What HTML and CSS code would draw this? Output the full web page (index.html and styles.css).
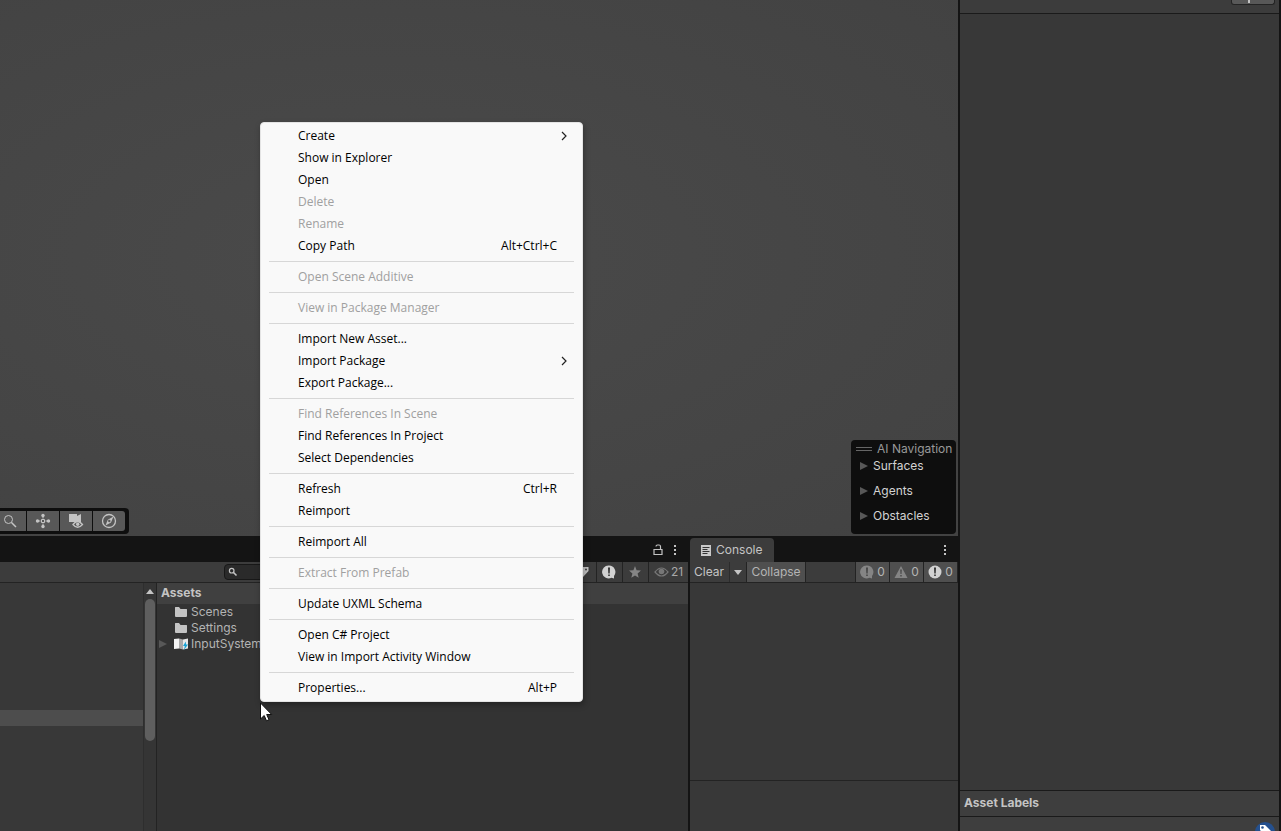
FILE: index.html
```
<!DOCTYPE html>
<html lang="en">
<head>
    <meta charset="UTF-8">
    <meta name="viewport" content="width=device-width, initial-scale=1.0">
    <title>Editor</title>
    <link rel="stylesheet" href="styles.css">
</head>
<body>
    <div class="editor">
        <div class="workspace">
            <main class="scene">
                <div class="scene-tools">
                    <button class="scene-tool first" aria-label="Zoom">
                        <svg width="16" height="16" viewBox="0 0 16 16" fill="none" stroke="#c4c4c4"><circle cx="6.5" cy="6.5" r="4"/><path d="M9.5 9.5l4.5 4.5" stroke-width="1.5"/></svg>
                    </button>
                    <button class="scene-tool" aria-label="Move">
                        <svg width="16" height="16" viewBox="0 0 16 16" fill="#c4c4c4"><circle cx="8" cy="2.500" r="1.700"/><circle cx="8" cy="13.500" r="1.700"/><circle cx="2.500" cy="8" r="1.700"/><circle cx="13.500" cy="8" r="1.700"/><path d="M7.500 3h1v2.500h-1zM7.500 10.500h1V13h-1zM3 7.500h2.500v1H3zM10.500 7.500H13v1h-2.500z"/><path d="M6.500 6.500h3v3h-3z" fill="none" stroke="#c4c4c4"/></svg>
                    </button>
                    <button class="scene-tool" aria-label="Camera view">
                        <svg width="16" height="16" viewBox="0 0 16 16"><path d="M1 1h8v2l4-2v8H6.500L5 9H1z" fill="#c4c4c4"/><path d="M5 11.500Q9.500 5.500 14.500 11.500Q9.500 17 5 11.500z" fill="#585858" stroke="#c4c4c4" stroke-width="1.300"/><circle cx="9.700" cy="11.300" r="1.700" fill="#c4c4c4"/></svg>
                    </button>
                    <button class="scene-tool last" aria-label="Navigation">
                        <svg width="16" height="16" viewBox="0 0 16 16" fill="none" stroke="#c4c4c4" stroke-width="1.300"><circle cx="8" cy="8" r="6.500"/><path d="M12.500 3.500l-2.500 6-5.500 3 2.300-5.700z" fill="#c4c4c4" stroke="none"/><circle cx="8.300" cy="8" r="1.200" fill="#585858" stroke="none"/></svg>
                    </button>
                </div>
                <section class="nav-overlay">
                    <h2 class="nav-title"><span class="grip"></span>AI Navigation</h2>
                    <button class="foldout"><span class="arrow-right"></span>Surfaces</button>
                    <button class="foldout"><span class="arrow-right"></span>Agents</button>
                    <button class="foldout"><span class="arrow-right"></span>Obstacles</button>
                </section>
            </main>

            <div class="docks">
                <section class="project">
                    <div class="tab-strip">
                        <button class="icon-button" aria-label="Lock">
                            <svg width="10" height="12" viewBox="0 0 10 12" fill="none" stroke="#c4c4c4" stroke-width="1.200"><path d="M1 5.500h8v5H1zM7.500 5.500V2.500Q7.500 1 6 1H4.500Q3 1 3 2.500"/></svg>
                        </button>
                        <button class="icon-button" aria-label="Project options">
                            <svg width="4" height="12" viewBox="0 0 4 12" fill="#c4c4c4"><path d="M1 1h2v2H1zM1 5h2v2H1zM1 9h2v2H1z"/></svg>
                        </button>
                    </div>
                    <div class="toolbar">
                        <label class="search">
                            <svg width="10" height="10" viewBox="0 0 10 10" fill="none" stroke="#c4c4c4" stroke-width="1.200"><circle cx="3.700" cy="3.700" r="2.300"/><path d="M5.500 5.500l3 3" stroke-width="1.600"/></svg>
                            <input type="text" aria-label="Search assets">
                        </label>
                        <button class="tool-button" aria-label="Search by label">
                            <svg width="12" height="12" viewBox="0 0 12 12" fill="#c4c4c4"><path d="M1 1h10.500v4L6 11 1 7z"/><circle cx="9" cy="3.500" r="1" fill="#3c3c3c"/></svg>
                        </button>
                        <button class="tool-button" aria-label="Search by log type">
                            <svg width="14" height="14" viewBox="0 0 14 14"><path d="M7 .500a6.500 6.500 0 0 1 5 10.500v2.500l-2.500-.700A6.500 6.500 0 1 1 7 .500z" fill="#d2d2d2"/><path d="M6 2.500h2l-.300 6H6.300zM6.200 9.500h1.600V11H6.200z" fill="#333"/></svg>
                        </button>
                        <button class="tool-button" aria-label="Favorites">
                            <svg width="14" height="14" viewBox="0 0 14 14" fill="#858585"><path d="M7 1l1.600 4.200 4.400.300-3.400 2.900 1.100 4.400L7 10.400l-3.700 2.400 1.100-4.400L1 5.500l4.400-.300z"/></svg>
                        </button>
                        <button class="tool-button hidden-count">
                            <svg width="15" height="12" viewBox="0 0 15 12" fill="none" stroke="#777"><path d="M1 6Q7.500-2 14 6Q7.500 14 1 6z" stroke-width="1.200"/><circle cx="7.500" cy="5.500" r="2.800" fill="#777" stroke="none"/></svg>21
                        </button>
                    </div>
                    <div class="project-body">
                        <div class="folder-tree">
                            <div class="tree-selection"></div>
                        </div>
                        <div class="scrollbar">
                            <span class="arrow-up"></span>
                            <div class="thumb"></div>
                        </div>
                        <div class="assets">
                            <h2 class="assets-title">Assets</h2>
                            <ul class="asset-list">
                                <li class="asset">
                                    <svg width="14" height="12" viewBox="0 0 14 12" fill="#c4c4c4"><path d="M1 1.500Q1 1 1.500 1H5l1.500 2H12.500q.500 0 .500.500V10q0 1-1 1H2q-1 0-1-1z"/></svg>
                                    Scenes
                                </li>
                                <li class="asset">
                                    <svg width="14" height="12" viewBox="0 0 14 12" fill="#c4c4c4"><path d="M1 1.500Q1 1 1.500 1H5l1.500 2H12.500q.500 0 .500.500V10q0 1-1 1H2q-1 0-1-1z"/></svg>
                                    Settings
                                </li>
                                <li class="asset">
                                    <span class="arrow-right"></span>
                                    <svg width="14" height="12" viewBox="0 0 14 12"><path d="M0 1l5-.500v10L0 11z" fill="#f4f4f4"/><path d="M5 .500L9 1.500v10L5 10.500z" fill="#aaa"/><path d="M9 1.500l5-1v10l-5 1z" fill="#e8e8e8"/><path d="M11.800 3.500L9 8h1.800L10 12l4-5.500h-2z" fill="#19a3d4"/></svg>
                                    InputSystem
                                </li>
                            </ul>
                        </div>
                    </div>
                </section>

                <section class="console">
                    <div class="tab-strip">
                        <button class="tab">
                            <svg width="10" height="11" viewBox="0 0 10 11"><path d="M0 0h10v11H0z" fill="#c9c9c9"/><path d="M1.500 2.500h7M1.500 4.500h5M1.500 6.500h7M1.500 8.500h5" stroke="#333"/></svg>
                            Console
                        </button>
                        <button class="icon-button" aria-label="Console options">
                            <svg width="4" height="12" viewBox="0 0 4 12" fill="#c4c4c4"><path d="M1 1h2v2H1zM1 5h2v2H1zM1 9h2v2H1z"/></svg>
                        </button>
                    </div>
                    <div class="toolbar">
                        <button class="clear">Clear</button>
                        <button class="clear-menu" aria-label="Clear options"><span class="arrow-down"></span></button>
                        <button class="collapse">Collapse</button>
                        <div class="counters">
                            <button class="counter">
                                <svg width="14" height="14" viewBox="0 0 14 14"><path d="M7 .500a6.500 6.500 0 0 1 5 10.500v2.500l-2.500-.700A6.500 6.500 0 1 1 7 .500z" fill="#858585"/><path d="M6 2.500h2l-.300 6H6.300zM6.200 9.500h1.600V11H6.200z" fill="#484848"/></svg>0
                            </button>
                            <button class="counter">
                                <svg width="14" height="14" viewBox="0 0 14 14"><path d="M7 1l6.500 12H.500z" fill="#858585"/><path d="M6.200 4.500h1.600L7.500 9h-1zM6.300 10h1.400v1.500H6.300z" fill="#484848"/></svg>0
                            </button>
                            <button class="counter">
                                <svg width="14" height="14" viewBox="0 0 14 14"><circle cx="7" cy="7" r="6.500" fill="#d2d2d2"/><path d="M6 2.500h2l-.300 6H6.300zM6.200 9.500h1.600V11H6.200z" fill="#333"/></svg>0
                            </button>
                        </div>
                    </div>
                    <div class="console-log"></div>
                    <div class="console-detail"></div>
                </section>
            </div>
        </div>

        <aside class="inspector">
            <div class="inspector-header">
                <button class="open-button" aria-label="Open"><span class="letter-stem"></span></button>
            </div>
            <div class="inspector-body"></div>
            <h2 class="labels-title">Asset Labels</h2>
            <div class="labels-body">
                <button class="label-button" aria-label="Edit labels">
                    <svg width="20" height="20" viewBox="0 0 20 20"><circle cx="10" cy="10" r="10" fill="#25508e"/><path d="M5 3h5l7 7-5 6-7-8z" fill="#fff"/><circle cx="7.500" cy="5.500" r="1.300" fill="#25508e"/></svg>
                </button>
            </div>
        </aside>
    </div>

    <div class="context-menu" role="menu">
        <button class="menu-item" role="menuitem">Create <svg class="chevron" width="6" height="10" viewBox="0 0 6 10"><path d="M1 1l4 4-4 4"/></svg></button>
        <button class="menu-item" role="menuitem">Show in Explorer</button>
        <button class="menu-item" role="menuitem">Open</button>
        <button class="menu-item" role="menuitem" disabled>Delete</button>
        <button class="menu-item" role="menuitem" disabled>Rename</button>
        <button class="menu-item" role="menuitem">Copy Path <span class="shortcut">Alt+Ctrl+C</span></button>
        <hr>
        <button class="menu-item" role="menuitem" disabled>Open Scene Additive</button>
        <hr>
        <button class="menu-item" role="menuitem" disabled>View in Package Manager</button>
        <hr>
        <button class="menu-item" role="menuitem">Import New Asset...</button>
        <button class="menu-item" role="menuitem">Import Package <svg class="chevron" width="6" height="10" viewBox="0 0 6 10"><path d="M1 1l4 4-4 4"/></svg></button>
        <button class="menu-item" role="menuitem">Export Package...</button>
        <hr>
        <button class="menu-item" role="menuitem" disabled>Find References In Scene</button>
        <button class="menu-item" role="menuitem">Find References In Project</button>
        <button class="menu-item" role="menuitem">Select Dependencies</button>
        <hr>
        <button class="menu-item" role="menuitem">Refresh <span class="shortcut">Ctrl+R</span></button>
        <button class="menu-item" role="menuitem">Reimport</button>
        <hr>
        <button class="menu-item" role="menuitem">Reimport All</button>
        <hr>
        <button class="menu-item" role="menuitem" disabled>Extract From Prefab</button>
        <hr>
        <button class="menu-item" role="menuitem">Update UXML Schema</button>
        <hr>
        <button class="menu-item" role="menuitem">Open C# Project</button>
        <button class="menu-item" role="menuitem">View in Import Activity Window</button>
        <hr>
        <button class="menu-item" role="menuitem">Properties... <span class="shortcut">Alt+P</span></button>
    </div>

    <svg class="cursor" width="13" height="20" viewBox="0 0 13 20"><path d="M.500 1v16l3.700-3.500 2.300 5.300 2.500-1.100-2.300-5.200h5z" fill="#fff" stroke="#111"/></svg>
</body>
</html>
```
FILE: styles.css
```
* {
    box-sizing: border-box;
}

body {
    margin: 0;
    background: #383838;
    color: #c4c4c4;
    font-family: Inter, sans-serif;
    font-size: 12px;
    line-height: 16px;
    overflow: hidden;
}

button {
    margin: 0;
    padding: 0;
    border: none;
    background: none;
    color: inherit;
    font: inherit;
}

h2 {
    margin: 0;
    font-size: 12px;
}

svg {
    flex: none;
    display: block;
}

.editor {
    display: flex;
    height: 100vh;
}

.workspace {
    flex: 1;
    min-width: 0;
    display: flex;
    flex-direction: column;
}

/* scene view */
.scene {
    flex: 1;
    display: flex;
    justify-content: space-between;
    align-items: flex-end;
    padding: 0 2px 2px 0;
    background: radial-gradient(ellipse at 40% 48%, #4a4a4a, #424242);
}

.scene-tools {
    display: flex;
    gap: 1px;
    padding: 3px 4px 3px 0;
    background: #0e0e0e;
    border-radius: 0 4px 4px 0;
}

.scene-tool {
    display: flex;
    align-items: center;
    justify-content: center;
    width: 32px;
    height: 20px;
    background: #585858;
}

.scene-tool.first {
    width: 26px;
    padding-right: 6px;
}

.scene-tool.last {
    border-radius: 0 3px 3px 0;
}

.nav-overlay {
    display: flex;
    flex-direction: column;
    width: 105px;
    height: 94px;
    background: #0e0e0e;
    border-radius: 4px;
}

.nav-title {
    display: flex;
    align-items: center;
    gap: 5px;
    height: 17px;
    padding-left: 5px;
    color: #999;
    font-weight: normal;
    white-space: nowrap;
}

.grip {
    width: 16px;
    height: 4px;
    border: solid #666;
    border-width: 1px 0;
}

.foldout {
    display: flex;
    align-items: center;
    gap: 5px;
    height: 17px;
    margin-bottom: 8px;
    padding-left: 9px;
    color: #d2d2d2;
}

.arrow-right {
    border: solid transparent;
    border-width: 4px 0 4px 8px;
    border-left-color: #585858;
}

/* bottom docks */
.docks {
    display: flex;
    height: 295px;
}

.project {
    flex: 1;
    min-width: 0;
    display: flex;
    flex-direction: column;
    background: #333;
}

.tab-strip {
    display: flex;
    align-items: center;
    justify-content: flex-end;
    gap: 10px;
    height: 26px;
    padding: 2px 11px 0 0;
    background: #141414;
}

.toolbar {
    display: flex;
    height: 21px;
    background: #3c3c3c;
    border-bottom: 1px solid #232323;
}

.project .toolbar {
    justify-content: flex-end;
}

.search {
    display: flex;
    align-items: center;
    width: 340px;
    height: 16px;
    margin: 2px 6px 0 0;
    padding-left: 3px;
    background: #2a2a2a;
    border: 1px solid #181818;
    border-radius: 4px;
}

.search input {
    flex: 1;
    min-width: 0;
    height: 14px;
    padding: 0 4px;
    border: none;
    background: none;
    color: inherit;
    font: inherit;
}

.tool-button {
    display: flex;
    align-items: center;
    justify-content: center;
    width: 26px;
    padding-right: 2px;
    border-left: 1px solid #232323;
}

.hidden-count {
    width: 40px;
    gap: 2px;
    padding: 0;
    color: #a8a8a8;
}

.project-body {
    flex: 1;
    display: flex;
}

.folder-tree {
    width: 143px;
    padding-top: 127px;
    background: #383838;
}

.tree-selection {
    height: 16px;
    background: #4d4d4d;
}

.scrollbar {
    display: flex;
    flex-direction: column;
    align-items: center;
    gap: 5px;
    width: 14px;
    padding-top: 6px;
    background: #353535;
    border-right: 1px solid #232323;
    box-shadow: inset 1px 0 #2e2e2e;
}

.arrow-up {
    border: solid transparent;
    border-width: 0 4px 5px 4px;
    border-bottom-color: #c4c4c4;
}

.thumb {
    width: 10px;
    height: 142px;
    background: #5f5f5f;
    border-radius: 5px;
}

.assets {
    flex: 1;
}

.assets-title {
    height: 21px;
    padding: 2px 4px;
    background: #404040;
}

.asset-list {
    margin: 0;
    padding: 0;
    list-style: none;
}

.asset {
    display: flex;
    align-items: center;
    gap: 3px;
    height: 16px;
    padding-left: 17px;
    color: #b4b4b4;
}

.asset .arrow-right {
    margin: 0 4px 0 -15px;
}

/* console */
.console {
    width: 270px;
    display: flex;
    flex-direction: column;
    border-left: 2px solid #141414;
    background: #383838;
}

.console .tab-strip {
    justify-content: space-between;
    align-items: stretch;
}

.tab {
    display: flex;
    align-items: center;
    gap: 5px;
    padding: 0 12px 0 11px;
    background: #3c3c3c;
    border-radius: 4px 4px 0 0;
}

.clear {
    width: 39px;
    text-align: left;
    padding-left: 4px;
}

.clear-menu {
    display: flex;
    align-items: center;
    justify-content: center;
    width: 18px;
    border-right: 1px solid #232323;
    box-shadow: inset 1px 0 #2c2c2c;
}

.arrow-down {
    border: solid transparent;
    border-width: 5px 4px 0 4px;
    border-top-color: #c4c4c4;
}

.collapse {
    width: 59px;
    background: #4f4f4f;
    border-right: 1px solid #232323;
    color: #b4b4b4;
}

.counters {
    display: flex;
    margin-left: auto;
    border-right: 1px solid #232323;
}

.counter {
    display: flex;
    align-items: center;
    justify-content: center;
    gap: 3px;
    width: 34px;
    background: #4f4f4f;
    border-left: 1px solid #232323;
    color: #b4b4b4;
}

.console-log {
    flex: 1;
}

.console-detail {
    height: 51px;
    border-top: 1px solid #232323;
}

/* inspector */
.inspector {
    width: 323px;
    display: flex;
    flex-direction: column;
    border: solid #141414;
    border-width: 0 2px;
    background: #383838;
}

.inspector-header {
    display: flex;
    justify-content: flex-end;
    align-items: flex-start;
    height: 14px;
    padding-right: 4px;
    background: #3c3c3c;
    border-bottom: 1px solid #1a1a1a;
}

.open-button {
    display: flex;
    width: 44px;
    height: 5px;
    padding-left: 16px;
    background: #585858;
    border: solid #242424;
    border-width: 0 1px 1px;
    border-radius: 0 0 3px 3px;
}

/* lower end of the clipped "p" */
.letter-stem {
    width: 2px;
    height: 3px;
    background: #c4c4c4;
}

.inspector-body {
    flex: 1;
}

.labels-title {
    height: 27px;
    padding: 4px;
    background: #3e3e3e;
    border: solid #1a1a1a;
    border-width: 1px 0;
}

.labels-body {
    display: flex;
    justify-content: flex-end;
    height: 14px;
    padding: 5px 4px 0;
    background: #3e3e3e;
    overflow: hidden;
}

.label-button {
    height: 20px;
}

/* context menu */
.context-menu {
    position: absolute;
    left: 260px;
    top: 122px;
    width: 323px;
    padding: 2px 0;
    background: #f9f9f9;
    border: 1px solid #e4e4e4;
    border-radius: 4px;
    box-shadow: 1px 3px 6px rgba(0, 0, 0, 0.3);
    color: #000;
    font-family: "Open Sans", sans-serif;
    font-size: 12px;
}

.menu-item {
    display: flex;
    align-items: center;
    justify-content: space-between;
    width: 100%;
    height: 22px;
    padding: 0 25px 0 37px;
}

.menu-item:disabled {
    color: #a0a0a0;
}

.chevron {
    margin-right: -10px;
    fill: none;
    stroke: #222;
    stroke-width: 1.2;
}

.context-menu hr {
    height: 1px;
    margin: 4px 8px;
    border: none;
    background: #d7d7d7;
}

.cursor {
    position: absolute;
    left: 260px;
    top: 702px;
}
```
